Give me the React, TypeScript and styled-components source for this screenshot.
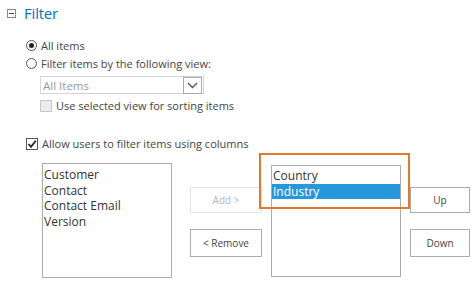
import styled, { createGlobalStyle } from "styled-components";

const GlobalStyle = createGlobalStyle`
  body {
    margin: 0;
    background: #fff;
    font-family: "Open Sans", "Noto Sans", sans-serif;
    color: #444;
  }
`;

const Page = styled.div`
  width: 474px;
  height: 282px;
  overflow: hidden;
  box-sizing: border-box;
  padding: 4px 0 0 7px;
`;

const Header = styled.div`
  display: flex;
  align-items: center;
  gap: 8px;
  height: 18px;
`;

const Toggle = styled.span`
  width: 7px;
  height: 7px;
  border: 1px solid #8a8a8a;
  display: flex;
  align-items: center;
  justify-content: center;
  &::after {
    content: "";
    width: 5px;
    height: 1px;
    background: #444;
  }
`;

const Title = styled.span`
  color: #0072c6;
  font-size: 15px;
  letter-spacing: -0.2px;
`;

const Section = styled.div`
  padding: 15px 0 0 19px;
  font-size: 11px;
  display: flex;
  flex-direction: column;
`;

const Row = styled.label<{ $mt?: number }>`
  display: flex;
  align-items: center;
  gap: 4px;
  height: 17px;
  margin-top: ${(p) => p.$mt ?? 0}px;
  white-space: nowrap;
  color: #444;
`;

const Radio = styled.span<{ $on?: boolean }>`
  width: 9px;
  height: 9px;
  border-radius: 50%;
  border: 1px solid #555;
  display: flex;
  align-items: center;
  justify-content: center;
  &::after {
    content: "";
    width: 5px;
    height: 5px;
    border-radius: 50%;
    background: ${(p) => (p.$on ? "#222" : "transparent")};
  }
`;

const Check = styled.span<{ $disabled?: boolean }>`
  width: 10px;
  height: 10px;
  border: 1px solid ${(p) => (p.$disabled ? "#c6c6c6" : "#555")};
  background: ${(p) => (p.$disabled ? "#ececec" : "#fff")};
  display: flex;
  align-items: center;
  justify-content: center;
`;

const Indent = styled.div`
  padding-left: 14px;
  display: flex;
  flex-direction: column;
`;

const Select = styled.div`
  margin-top: 4px;
  width: 162px;
  height: 16px;
  border: 1px solid #d4d4d4;
  display: flex;
  align-items: center;
  color: #999;
  font-size: 11.5px;
  box-sizing: content-box;
`;

const SelectText = styled.span`
  flex: 1;
  padding-left: 2px;
`;

const Arrow = styled.span`
  width: 17px;
  height: 15px;
  border: 1px solid #aaa;
  margin-right: 1px;
  display: flex;
  align-items: center;
  justify-content: center;
`;

const Columns = styled.div`
  display: flex;
  margin-top: 11px;
  margin-left: 16px;
  align-items: flex-start;
`;

const ListBox = styled.div<{ $mt?: number; $h: number; $ml?: number }>`
  width: 130px;
  height: ${(p) => p.$h}px;
  border: 1px solid #ababab;
  margin-top: ${(p) => p.$mt ?? 0}px;
  margin-left: ${(p) => p.$ml ?? 0}px;
  padding-top: 2px;
  box-sizing: border-box;
  font-size: 12px;
  line-height: 15.5px;
  color: #333;
  position: relative;
`;

const Item = styled.div<{ $sel?: boolean }>`
  padding-left: 1px;
  background: ${(p) => (p.$sel ? "#2797dc" : "transparent")};
  color: ${(p) => (p.$sel ? "#fff" : "#333")};
`;

const ButtonCol = styled.div<{ $ml: number; $w: number }>`
  display: flex;
  flex-direction: column;
  gap: 16px;
  margin-left: ${(p) => p.$ml}px;
  margin-top: 24px;
  width: ${(p) => p.$w}px;
`;

const Btn = styled.div<{ $disabled?: boolean; $h: number }>`
  height: ${(p) => p.$h}px;
  box-sizing: border-box;
  border: 1px solid ${(p) => (p.$disabled ? "#e3e3e3" : "#ababab")};
  color: ${(p) => (p.$disabled ? "#b5b5b5" : "#444")};
  font-size: 10px;
  display: flex;
  align-items: center;
  justify-content: center;
`;

const Highlight = styled.div`
  position: absolute;
  left: -13px;
  top: -13px;
  width: 151px;
  height: 56px;
  border: 2px solid #e2792a;
  box-sizing: border-box;
  pointer-events: none;
`;

export default function App() {
  return (
    <Page>
      <GlobalStyle />
      <Header>
        <Toggle />
        <Title>Filter</Title>
      </Header>
      <Section>
        <Row>
          <Radio $on />
          All items
        </Row>
        <Row $mt={1}>
          <Radio />
          Filter items by the following view:
        </Row>
        <Indent>
          <Select>
            <SelectText>All Items</SelectText>
            <Arrow>
              <svg width="11" height="7" viewBox="0 0 11 7">
                <path d="M1 1 L5.5 5.5 L10 1" fill="none" stroke="#555" strokeWidth="1.4" />
              </svg>
            </Arrow>
          </Select>
          <Row $mt={3}>
            <Check $disabled />
            Use selected view for sorting items
          </Row>
        </Indent>
        <Row $mt={21}>
          <Check>
            <svg width="10" height="10" viewBox="0 0 10 10">
              <path d="M1.5 5 L4 7.8 L8.8 1.8" fill="none" stroke="#222" strokeWidth="1.8" />
            </svg>
          </Check>
          Allow users to filter items using columns
        </Row>
        <Columns>
          <ListBox $h={115} style={{ paddingTop: 3 }}>
            <Item>Customer</Item>
            <Item>Contact</Item>
            <Item>Contact Email</Item>
            <Item>Version</Item>
          </ListBox>
          <ButtonCol $ml={18} $w={72}>
            <Btn $disabled $h={26}>Add &gt;</Btn>
            <Btn $h={28}>&lt; Remove</Btn>
          </ButtonCol>
          <ListBox $mt={2} $h={112} $ml={9}>
            <Highlight />
            <Item>Country</Item>
            <Item $sel>Industry</Item>
          </ListBox>
          <ButtonCol $ml={9} $w={60}>
            <Btn $h={26}>Up</Btn>
            <Btn $h={28}>Down</Btn>
          </ButtonCol>
        </Columns>
      </Section>
    </Page>
  );
}
